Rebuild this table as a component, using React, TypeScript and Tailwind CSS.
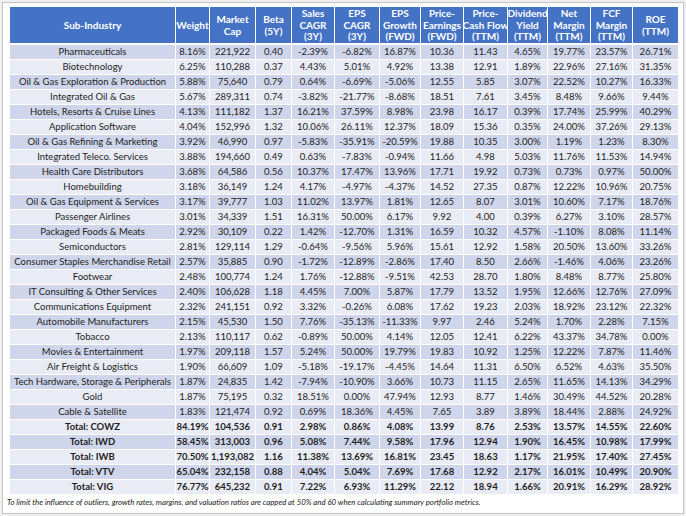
import React from "react";

const cols = "grid grid-cols-[165px_33px_45px_35px_42px_44px_40px_42px_43px_39px_42px_41px_45px] gap-x-px";

const headers = [
  ["Sub-Industry"],
  ["Weight"],
  ["Market", "Cap"],
  ["Beta", "(5Y)"],
  ["Sales", "CAGR", "(3Y)"],
  ["EPS", "CAGR", "(3Y)"],
  ["EPS", "Growth", "(FWD)"],
  ["Price-", "Earnings", "(FWD)"],
  ["Price-", "Cash Flow", "(TTM)"],
  ["Dividend", "Yield", "(TTM)"],
  ["Net", "Margin", "(TTM)"],
  ["FCF", "Margin", "(TTM)"],
  ["ROE", "(TTM)"],
];

const rows: string[][] = [
  ["Pharmaceuticals", "8.16%", "221,922", "0.40", "-2.39%", "-6.82%", "16.87%", "10.36", "11.43", "4.65%", "19.77%", "23.57%", "26.71%"],
  ["Biotechnology", "6.25%", "110,288", "0.37", "4.43%", "5.01%", "4.92%", "13.38", "12.91", "1.89%", "22.96%", "27.16%", "31.35%"],
  ["Oil & Gas Exploration & Production", "5.88%", "75,640", "0.79", "0.64%", "-6.69%", "-5.06%", "12.55", "5.85", "3.07%", "22.52%", "10.27%", "16.33%"],
  ["Integrated Oil & Gas", "5.67%", "289,311", "0.74", "-3.82%", "-21.77%", "-8.68%", "18.51", "7.61", "3.45%", "8.48%", "9.66%", "9.44%"],
  ["Hotels, Resorts & Cruise Lines", "4.13%", "111,182", "1.37", "16.21%", "37.59%", "8.98%", "23.98", "16.17", "0.39%", "17.74%", "25.99%", "40.29%"],
  ["Application Software", "4.04%", "152,996", "1.32", "10.06%", "26.11%", "12.37%", "18.09", "15.36", "0.35%", "24.00%", "37.26%", "29.13%"],
  ["Oil & Gas Refining & Marketing", "3.92%", "46,990", "0.97", "-5.83%", "-35.91%", "-20.59%", "19.88", "10.35", "3.00%", "1.19%", "1.23%", "8.30%"],
  ["Integrated Teleco. Services", "3.88%", "194,660", "0.49", "0.63%", "-7.83%", "-0.94%", "11.66", "4.98", "5.03%", "11.76%", "11.53%", "14.94%"],
  ["Health Care Distributors", "3.68%", "64,586", "0.56", "10.37%", "17.47%", "13.96%", "17.71", "19.92", "0.73%", "0.73%", "0.97%", "50.00%"],
  ["Homebuilding", "3.18%", "36,149", "1.24", "4.17%", "-4.97%", "-4.37%", "14.52", "27.35", "0.87%", "12.22%", "10.96%", "20.75%"],
  ["Oil & Gas Equipment & Services", "3.17%", "39,777", "1.03", "11.02%", "13.97%", "1.81%", "12.65", "8.07", "3.01%", "10.60%", "7.17%", "18.76%"],
  ["Passenger Airlines", "3.01%", "34,339", "1.51", "16.31%", "50.00%", "6.17%", "9.92", "4.00", "0.39%", "6.27%", "3.10%", "28.57%"],
  ["Packaged Foods & Meats", "2.92%", "30,109", "0.22", "1.42%", "-12.70%", "1.31%", "16.59", "10.32", "4.57%", "-1.10%", "8.08%", "11.14%"],
  ["Semiconductors", "2.81%", "129,114", "1.29", "-0.64%", "-9.56%", "5.96%", "15.61", "12.92", "1.58%", "20.50%", "13.60%", "33.26%"],
  ["Consumer Staples Merchandise Retail", "2.57%", "35,885", "0.90", "-1.72%", "-12.89%", "-2.86%", "17.40", "8.50", "2.66%", "-1.46%", "4.06%", "23.26%"],
  ["Footwear", "2.48%", "100,774", "1.24", "1.76%", "-12.88%", "-9.51%", "42.53", "28.70", "1.80%", "8.48%", "8.77%", "25.80%"],
  ["IT Consulting & Other Services", "2.40%", "106,628", "1.18", "4.45%", "7.00%", "5.87%", "17.79", "13.52", "1.95%", "12.66%", "12.76%", "27.09%"],
  ["Communications Equipment", "2.32%", "241,151", "0.92", "3.32%", "-0.26%", "6.08%", "17.62", "19.23", "2.03%", "18.92%", "23.12%", "22.32%"],
  ["Automobile Manufacturers", "2.15%", "45,530", "1.50", "7.76%", "-35.13%", "-11.33%", "9.97", "2.46", "5.24%", "1.70%", "2.28%", "7.15%"],
  ["Tobacco", "2.13%", "110,117", "0.62", "-0.89%", "50.00%", "4.14%", "12.05", "12.41", "6.22%", "43.37%", "34.78%", "0.00%"],
  ["Movies & Entertainment", "1.97%", "209,118", "1.57", "5.24%", "50.00%", "19.79%", "19.83", "10.92", "1.25%", "12.22%", "7.87%", "11.46%"],
  ["Air Freight & Logistics", "1.90%", "66,609", "1.09", "-5.18%", "-19.17%", "-4.45%", "14.64", "11.31", "6.50%", "6.52%", "4.63%", "35.50%"],
  ["Tech Hardware, Storage & Peripherals", "1.87%", "24,835", "1.42", "-7.94%", "-10.90%", "3.66%", "10.73", "11.15", "2.65%", "11.65%", "14.13%", "34.29%"],
  ["Gold", "1.87%", "75,195", "0.32", "18.51%", "0.00%", "47.94%", "12.93", "8.77", "1.46%", "30.49%", "44.52%", "20.28%"],
  ["Cable & Satellite", "1.83%", "121,474", "0.92", "0.69%", "18.36%", "4.45%", "7.65", "3.89", "3.89%", "18.44%", "2.88%", "24.92%"],
];

const totals: string[][] = [
  ["Total: COWZ", "84.19%", "104,536", "0.91", "2.98%", "0.86%", "4.08%", "13.99", "8.76", "2.53%", "13.57%", "14.55%", "22.60%"],
  ["Total: IWD", "58.45%", "313,003", "0.96", "5.08%", "7.44%", "9.58%", "17.96", "12.94", "1.90%", "16.45%", "10.98%", "17.99%"],
  ["Total: IWB", "70.50%", "1,193,082", "1.16", "11.38%", "13.69%", "16.81%", "23.45", "18.63", "1.17%", "21.95%", "17.40%", "27.45%"],
  ["Total: VTV", "65.04%", "232,158", "0.88", "4.04%", "5.04%", "7.69%", "17.68", "12.92", "2.17%", "16.01%", "10.49%", "20.90%"],
  ["Total: VIG", "76.77%", "645,232", "0.91", "7.22%", "6.93%", "11.29%", "22.12", "18.94", "1.66%", "20.91%", "16.29%", "28.92%"],
];

function Row({ cells, index, bold }: { cells: string[]; index: number; bold?: boolean }) {
  const bg = index % 2 === 0 ? "bg-[#cfd5ea]" : "bg-[#e9ebf5]";
  return (
    <div className={cols}>
      {cells.map((c, i) => (
        <div
          key={i}
          className={`${bg} h-[14px] flex items-center justify-center whitespace-nowrap text-[9.5px] leading-none text-[#1e1e1e] ${bold ? "font-bold" : ""}`}
        >
          {c}
        </div>
      ))}
    </div>
  );
}

export default function App() {
  return (
    <div className="w-[686px] h-[516px] bg-[#efefef] p-[2px] font-['Lato',sans-serif]">
      <div className="h-full border border-[#c4c4c4] bg-white pt-[4px]">
        <div className="ml-[7px] w-[668px] flex flex-col gap-y-px">
          <div className={`${cols} mb-px`}>
            {headers.map((h, i) => (
              <div
                key={i}
                className="bg-[#4472c4] h-[36px] pt-[1px] flex flex-col items-center justify-center text-white font-bold text-[10px] leading-[11.5px] whitespace-nowrap"
              >
                {h.map((line, j) => (
                  <span key={j}>{line}</span>
                ))}
              </div>
            ))}
          </div>
          {rows.map((r, i) => (
            <Row key={r[0]} cells={r} index={i} />
          ))}
          {totals.map((r, i) => (
            <Row key={r[0]} cells={r} index={i + 1} bold />
          ))}
        </div>
        <p className="ml-[4px] mt-[3px] text-[7.8px] italic text-[#222] leading-[10px] whitespace-nowrap">
          To limit the influence of outliers, growth rates, margins, and valuation ratios are capped at 50% and 60 when calculating summary portfolio metrics.
        </p>
      </div>
    </div>
  );
}
